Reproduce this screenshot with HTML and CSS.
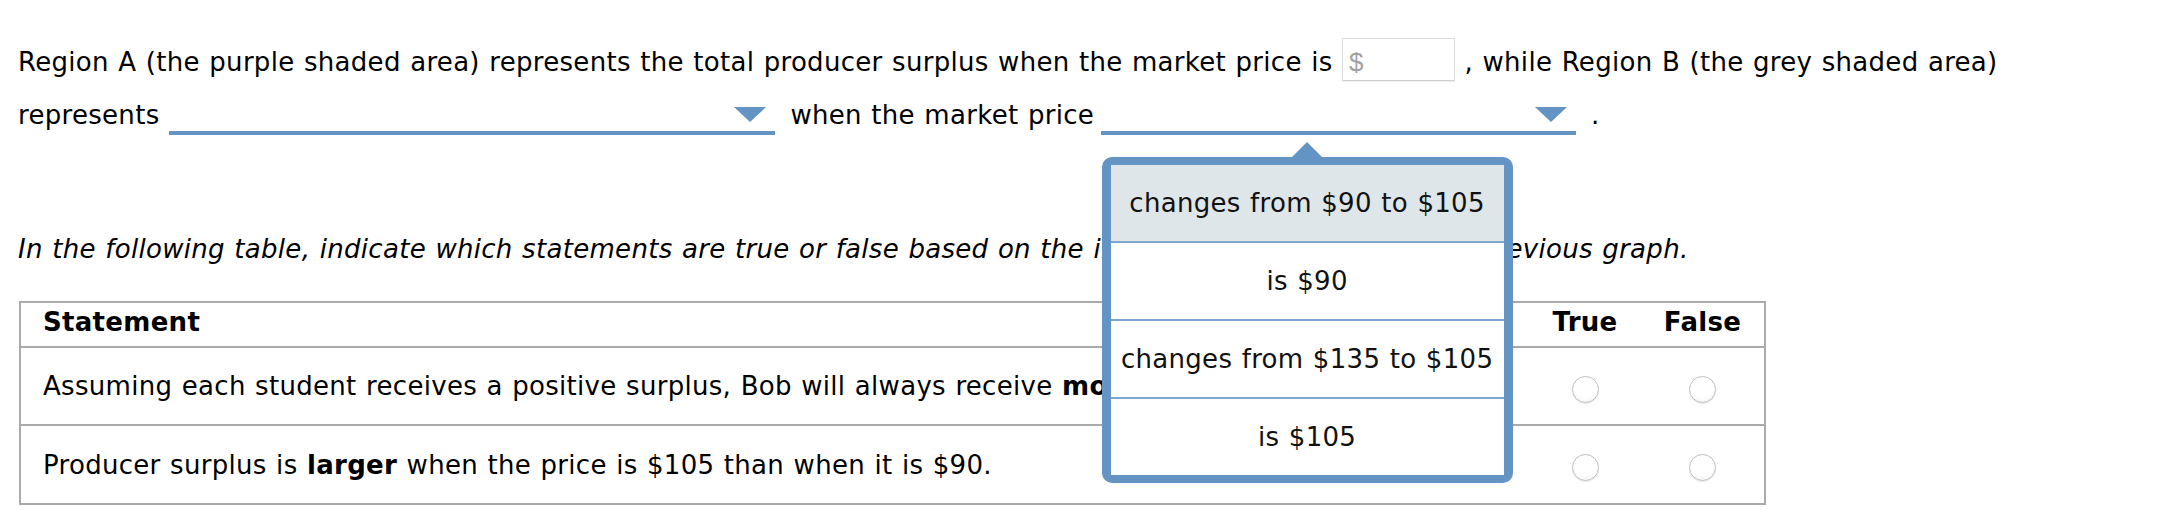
FILE: index.html
```html
<!DOCTYPE html>
<html lang="en">
<head>
<meta charset="utf-8">
<title>Producer surplus</title>
<link rel="stylesheet" href="styles.css">
</head>
<body>
<div class="page">
  <p class="question">Region A (the purple shaded area) represents the total producer surplus when the market price is <span class="price-input">$</span> , while Region B (the grey shaded area) represents <span class="dropdown wide"></span> when the market price <span class="dropdown narrow open"><span class="menu"><span class="menu-item hover">changes from $90 to $105</span><span class="menu-item">is $90</span><span class="menu-item">changes from $135 to $105</span><span class="menu-item">is $105</span></span></span> .</p>

  <p class="instructions">In the following table, indicate which statements are true or false based on the information provided on the previous graph.</p>

  <table class="statements">
    <thead>
      <tr>
        <th class="col-statement">Statement</th>
        <th class="col-choice col-true">True</th>
        <th class="col-choice col-false">False</th>
      </tr>
    </thead>
    <tbody>
      <tr class="row-a">
        <td class="col-statement">Assuming each student receives a positive surplus, Bob will always receive <b>more</b> surplus.</td>
        <td class="col-choice"><span class="radio"></span></td>
        <td class="col-choice"><span class="radio"></span></td>
      </tr>
      <tr class="row-b">
        <td class="col-statement">Producer surplus is <b>larger</b> when the price is $105 than when it is $90.</td>
        <td class="col-choice"><span class="radio"></span></td>
        <td class="col-choice"><span class="radio"></span></td>
      </tr>
    </tbody>
  </table>
</div>
</body>
</html>
```
FILE: styles.css
```css
html, body {
  margin: 0;
  padding: 0;
  background: #ffffff;
}

body {
  font-family: "DejaVu Sans", Verdana, sans-serif;
  font-size: 26px;
  letter-spacing: 0.3px;
  word-spacing: 0.9px;
  color: #000000;
}

.page {
  padding: 36px 0 0 18px;
  width: 2100px;
}

.question {
  margin: 0;
  line-height: 53px;
}

.price-input {
  display: inline-block;
  box-sizing: border-box;
  width: 113px;
  height: 43px;
  line-height: 46px;
  padding-left: 6px;
  border: 1px solid #dedede;
  border-bottom-color: #cfcfcf;
  box-shadow: 0 1px 1px rgba(0, 0, 0, 0.06);
  font-family: "Liberation Sans", Arial, sans-serif;
  font-size: 26px;
  letter-spacing: 0;
  color: #a0a0a0;
  vertical-align: baseline;
}

.dropdown {
  display: inline-block;
  position: relative;
  box-sizing: border-box;
  height: 36px;
  margin-bottom: -11px;
  margin-right: 6px;
  border-bottom: 4px solid #6494c4;
  vertical-align: baseline;
}

.dropdown::after {
  content: "";
  float: right;
  width: 0;
  height: 0;
  margin-top: 8px;
  margin-right: 9px;
  border-left: 16px solid transparent;
  border-right: 16px solid transparent;
  border-top: 15px solid #6494c4;
}

.dropdown.wide {
  width: 606px;
}

.dropdown.narrow {
  width: 475px;
  margin-left: -3px;
}

.menu {
  position: absolute;
  z-index: 10;
  top: 58px;
  left: 1px;
  box-sizing: border-box;
  width: 411px;
  display: flex;
  flex-direction: column;
  border: 8px solid #6494c4;
  border-left-width: 9px;
  border-right-width: 9px;
  border-radius: 10px;
  background: #ffffff;
  line-height: 30px;
  white-space: nowrap;
}

.menu::before {
  content: "";
  position: absolute;
  top: -23px;
  left: 50%;
  margin-left: -15px;
  width: 0;
  height: 0;
  border-left: 15px solid transparent;
  border-right: 15px solid transparent;
  border-bottom: 15px solid #6494c4;
}

.menu-item {
  display: flex;
  align-items: center;
  justify-content: center;
  height: 76px;
  color: #111111;
  background: #ffffff;
}

.menu-item + .menu-item {
  border-top: 2px solid #7ea6d0;
}

.menu-item.hover {
  background: #dfe6e9;
}

.instructions {
  margin: 92px 0 0 0;
  line-height: 30px;
  font-style: italic;
  white-space: nowrap;
}

.statements {
  margin: 37px 0 0 1px;
  width: 1747px;
  border-collapse: separate;
  border-spacing: 0;
  border: 2px solid #aaaaaa;
  line-height: 30px;
}

.statements th,
.statements td {
  padding: 0;
  vertical-align: middle;
}

.statements th {
  padding-top: 4px;
  padding-bottom: 9px;
  vertical-align: top;
  border-bottom: 2px solid #aaaaaa;
  font-weight: bold;
}

.statements .row-a td {
  height: 76px;
  border-bottom: 2px solid #aaaaaa;
}

.statements .row-b td {
  height: 77px;
}

.col-statement {
  text-align: left;
  padding-left: 22px !important;
  white-space: nowrap;
}

.col-true {
  width: 112px;
}

.col-false {
  width: 123px;
}

.col-choice {
  text-align: center;
}

.radio {
  display: block;
  box-sizing: border-box;
  width: 27px;
  height: 27px;
  margin: 6px auto 0 auto;
  border-radius: 50%;
  border: 1.5px solid #bfbfbf;
  background: radial-gradient(circle at 50% 35%, #ffffff 55%, #eeeeee 100%);
  box-shadow: 0 1px 1px rgba(0, 0, 0, 0.1);
}
```
